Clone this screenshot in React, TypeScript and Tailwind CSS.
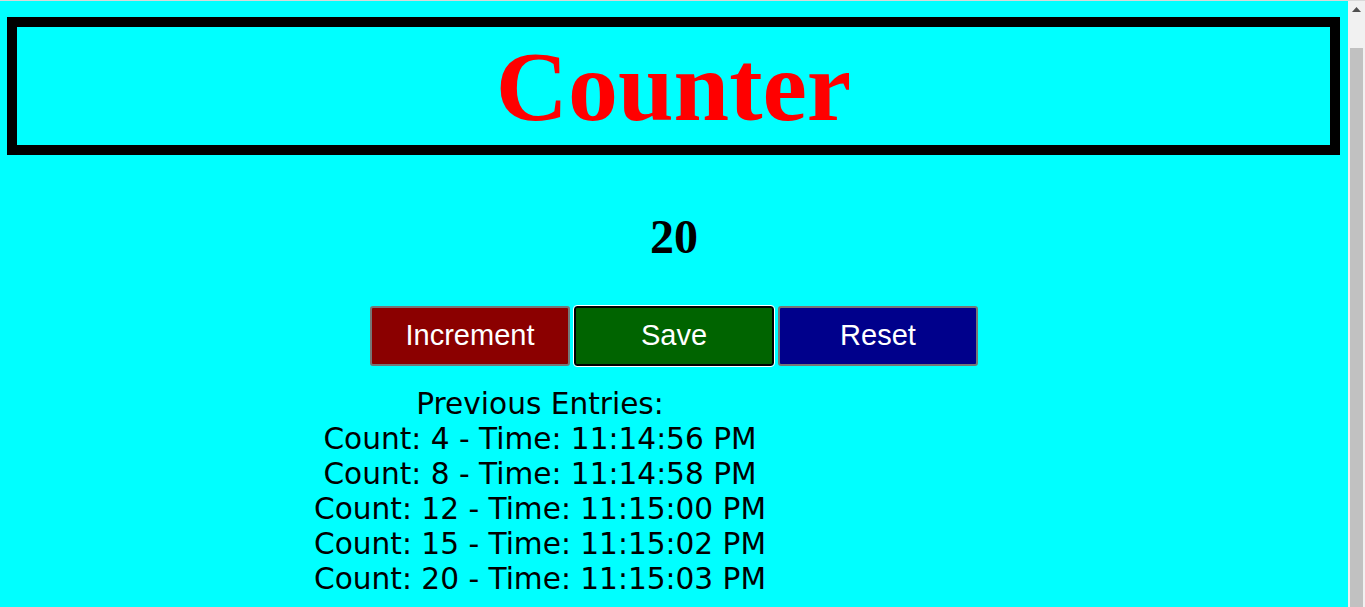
import { useState } from "react"

type Entry = { count: number; time: string }

const initialEntries: Entry[] = [
  { count: 4, time: "11:14:56 PM" },
  { count: 8, time: "11:14:58 PM" },
  { count: 12, time: "11:15:00 PM" },
  { count: 15, time: "11:15:02 PM" },
  { count: 20, time: "11:15:03 PM" },
]

const ScrollBar = () => (
  <div className="w-[17px] shrink-0 bg-[#f1f1f1] flex flex-col items-center">
    <div className="h-[17px] w-full flex items-center justify-center">
      <svg width="9" height="5" viewBox="0 0 9 5">
        <path d="M0 5 L4.5 0 L9 5 Z" fill="#505050" />
      </svg>
    </div>
    <div className="mt-[30px] w-[13px] flex-1 bg-[#c1c1c1]" />
  </div>
)

const App = () => {
  const [count, setCount] = useState(20)
  const [entries, setEntries] = useState<Entry[]>(initialEntries)

  const save = () => {
    const time = new Date().toLocaleTimeString("en-US")
    setEntries(prev => [...prev, { count, time }])
  }

  return (
    <div className="h-screen flex border-t border-[#d9d9d9] overflow-hidden">
      <div className="flex-1 min-w-0 bg-[#00ffff] pb-[60px]">
        <div className="mt-[16px] ml-[7px] mr-[8px] border-[10px] border-black">
          <h1 className="pt-[2px] text-center text-[100px] leading-[116px] font-bold text-[#ff0000] font-['Liberation_Serif','Times_New_Roman',serif]">
            Counter
          </h1>
        </div>

        <h2 className="mt-[54px] text-center text-[48px] leading-[55px] font-bold text-black font-['Liberation_Serif','Times_New_Roman',serif]">
          {count}
        </h2>

        <div className="mt-[42px] flex justify-center gap-[4px] font-['Liberation_Sans',Arial,sans-serif] text-[29px] text-white">
          <button
            onClick={() => setCount(c => c + 1)}
            className="w-[200px] h-[60px] flex items-center justify-center rounded-[3px] border-2 border-[#767676] bg-[#8b0000]"
          >
            Increment
          </button>
          <button
            onClick={save}
            className="w-[200px] h-[60px] flex items-center justify-center rounded-[3px] border-2 border-black outline outline-1 outline-white bg-[#006400]"
          >
            Save
          </button>
          <button
            onClick={() => { setCount(0); setEntries([]) }}
            className="w-[200px] h-[60px] flex items-center justify-center rounded-[3px] border-2 border-[#767676] bg-[#00008b]"
          >
            Reset
          </button>
        </div>

        <div className="mt-[21px] ml-[290px] w-[500px] text-center whitespace-nowrap text-[29.6px] leading-[35px] text-black font-['DejaVu_Sans',Verdana,sans-serif]">
          <div>Previous Entries:</div>
          {entries.map((e, i) => (
            <div key={i}>Count: {e.count} - Time: {e.time}</div>
          ))}
        </div>
      </div>
      <ScrollBar />
    </div>
  )
}

export default App
